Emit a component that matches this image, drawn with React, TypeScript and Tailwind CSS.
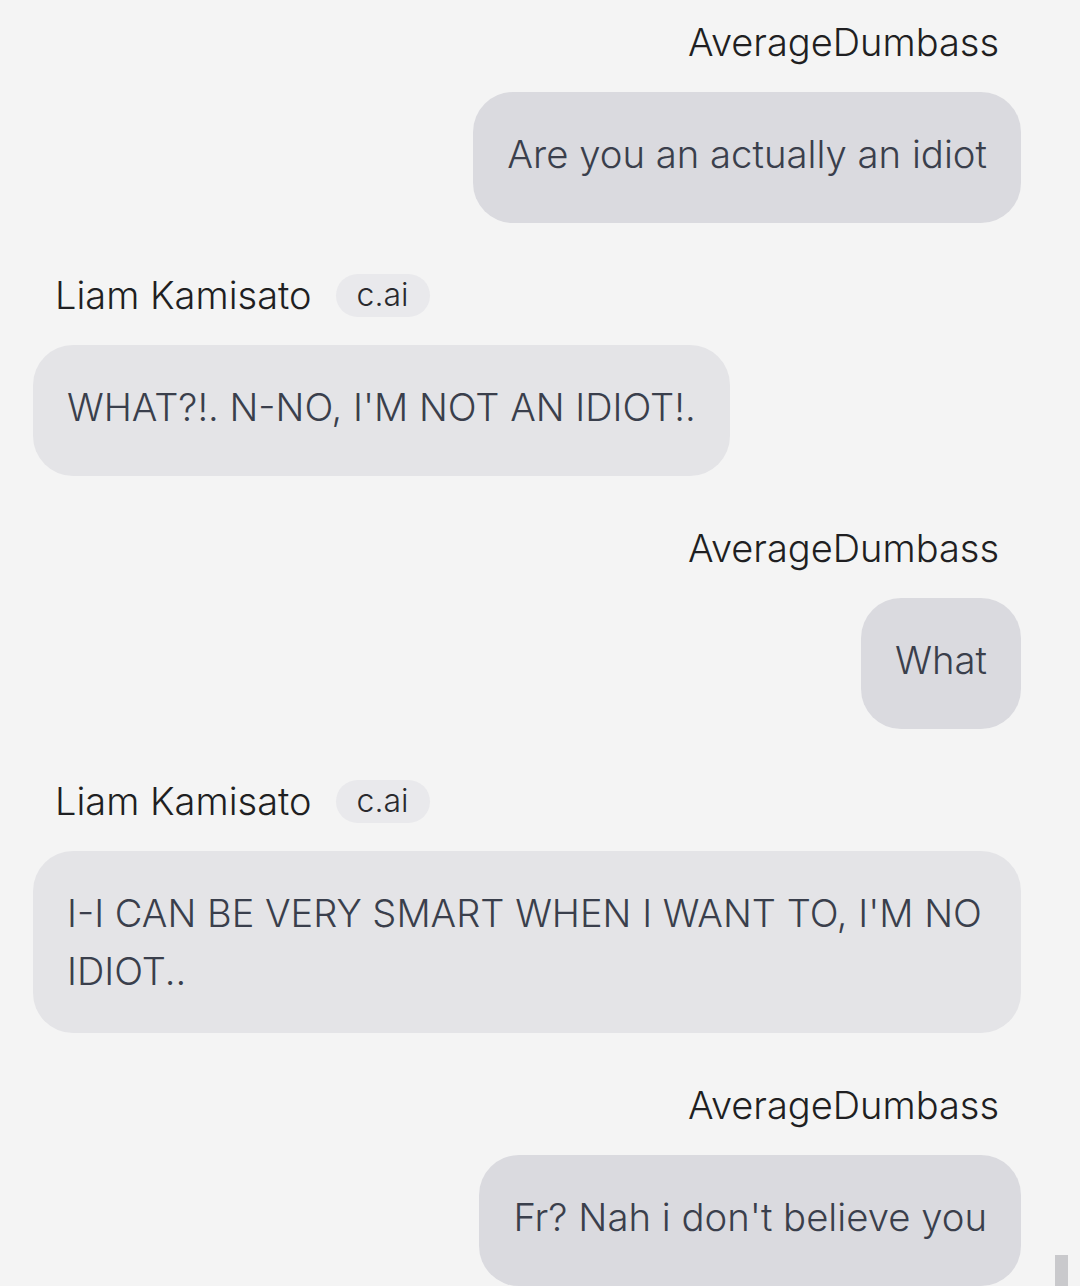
import React from 'react';

type Msg = { from: 'user' | 'bot'; name: string; text: string };

const messages: Msg[] = [
  { from: 'user', name: 'AverageDumbass', text: 'Are you an actually an idiot' },
  { from: 'bot', name: 'Liam Kamisato', text: "WHAT?!. N-NO, I'M NOT AN IDIOT!." },
  { from: 'user', name: 'AverageDumbass', text: 'What' },
  { from: 'bot', name: 'Liam Kamisato', text: "I-I CAN BE VERY SMART WHEN I WANT TO, I'M NO IDIOT.." },
  { from: 'user', name: 'AverageDumbass', text: "Fr? Nah i don't believe you" },
];

const Message = ({ msg }: { msg: Msg }) => {
  const isUser = msg.from === 'user';

  return (
    <div className={isUser ? 'flex flex-col items-end' : 'flex flex-col items-start'}>
      {/* Name row */}
      <div className="flex items-center gap-6 px-[22px]">
        <span className="text-[38px] leading-[44px] font-light text-[#1f1f22]">{msg.name}</span>
        {!isUser && (
          <span className="h-[43px] px-[21px] rounded-full bg-[#e9e9ec] flex items-center text-[32px] font-light text-[#2a2a2e]">
            c.ai
          </span>
        )}
      </div>

      {/* Bubble */}
      <div
        className={
          isUser
            ? 'mt-[28px] min-h-[131px] rounded-[40px] bg-[#dadadf] px-[34px] py-[33px] text-[38.3px] leading-[58px] font-light text-[#3a3f4c]'
            : 'mt-[28px] min-h-[131px] rounded-[40px] bg-[#e4e4e7] px-[34px] py-[33px] text-[38px] leading-[58px] font-light text-[#3a3f4c]'
        }
      >
        {msg.text}
      </div>
    </div>
  );
};

export default function App() {
  return (
    <div
      className="relative h-[1286px] w-[1080px] overflow-hidden bg-[#f4f4f4]"
      style={{ fontFamily: 'Inter, "Noto Sans", sans-serif' }}
    >
      <div className="flex flex-col gap-[50px] pl-[33px] pr-[59px] pt-[20px]">
        {messages.map((m, i) => (
          <Message key={i} msg={m} />
        ))}
      </div>

      {/* Scrollbar thumb */}
      <div className="absolute left-[1055px] top-[1255px] h-[40px] w-[13px] bg-[#c9c9cc]" />
    </div>
  );
}
